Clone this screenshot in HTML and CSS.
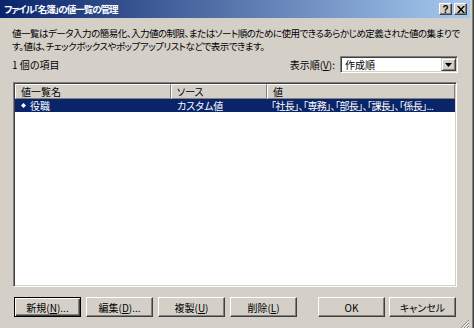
FILE: index.html
```html
<!DOCTYPE html>
<html lang="ja">
<head>
  <meta charset="UTF-8">
  <title>ファイル「名簿」の値一覧の管理</title>
  <link rel="stylesheet" href="styles.css">
</head>
<body>
  <div class="dialog">
    <div class="titlebar">
      <span class="title">ファイル「名簿」の値一覧の管理</span>
      <div class="caption-buttons">
        <span class="cap-btn help">?</span>
        <span class="cap-btn">
          <svg width="8" height="7" viewBox="0 0 8 7"><path d="M0 0h2l2 2.5L6 0h2L5 3.5 8 7H6L4 4.5 2 7H0l3-3.5z" fill="#000"/></svg>
        </span>
      </div>
    </div>

    <div class="content">
      <p class="desc">値一覧はデータ入力の簡易化、入力値の制限、またはソート順のために使用できるあらかじめ定義された値の集まりで<br>す。値は、チェックボックスやポップアップリストなどで表示できます。</p>

      <div class="toolbar">
        <span class="count">1 個の項目</span>
        <div class="sort">
          <span class="sort-label">表示順(<u>V</u>):</span>
          <div class="combo">
            <span class="combo-text">作成順</span>
            <span class="combo-btn">
              <svg width="7" height="4" viewBox="0 0 7 4"><path d="M0 0h7L3.5 4z" fill="#000"/></svg>
            </span>
          </div>
        </div>
      </div>

      <div class="listview">
        <div class="lv-header">
          <div class="col c1">値一覧名</div>
          <div class="col c2">ソース</div>
          <div class="col c3">値</div>
        </div>
        <div class="lv-row selected">
          <div class="cell c1">
            <svg class="bullet" width="5" height="5" viewBox="0 0 5 5"><path d="M2.5 0L5 2.5 2.5 5 0 2.5z" fill="#fff"/></svg>
            役職
          </div>
          <div class="cell c2">カスタム値</div>
          <div class="cell c3">「社長」、「専務」、「部長」、「課長」、「係長」...</div>
        </div>
      </div>

      <div class="buttons">
        <div class="btn-group">
          <button class="btn default">新規(<u>N</u>)...</button>
          <button class="btn">編集(<u>D</u>)...</button>
          <button class="btn">複製(<u>U</u>)</button>
          <button class="btn">削除(<u>L</u>)</button>
        </div>
        <div class="btn-group">
          <button class="btn">OK</button>
          <button class="btn">キャンセル</button>
        </div>
      </div>
    </div>

    <div class="grip">
      <svg width="10" height="10" viewBox="0 0 10 10">
        <path d="M10 1L1 10M10 4L4 10M10 7L7 10" stroke="#808080" stroke-width="1"/>
        <path d="M10 2L2 10M10 5L5 10M10 8L8 10" stroke="#fff" stroke-width="1"/>
      </svg>
    </div>
  </div>
</body>
</html>
```

FILE: styles.css
```css
/* Classic dialog look */
* {
  box-sizing: border-box;
}

body {
  margin: 0;
  background: #d4d0c8;
  font-family: "Noto Sans CJK JP", "Noto Sans", sans-serif;
  font-size: 10px;
  font-feature-settings: "palt";
  color: #000;
}

.dialog {
  position: relative;
  width: 474px;
  height: 328px;
  padding-right: 3px;
  background: #d4d0c8;
  border-right: 1px solid #404040;
  box-shadow: inset -1px 0 #808080;
  overflow: hidden;
}

/* Title bar */
.titlebar {
  height: 18px;
  display: flex;
  align-items: center;
  justify-content: space-between;
  padding: 0 3px 0 4px;
  background: linear-gradient(to right, #0a246a, #a6caf0);
}

.title {
  color: #fff;
  font-weight: bold;
  font-size: 9.5px;
  letter-spacing: -1px;
}

.caption-buttons {
  display: flex;
  gap: 2px;
}

.cap-btn {
  width: 13px;
  height: 12px;
  display: flex;
  align-items: center;
  justify-content: center;
  background: #d4d0c8;
  border: 1px solid;
  border-color: #fff #404040 #404040 #fff;
  box-shadow: inset -1px -1px #808080;
  font-family: "Liberation Sans", sans-serif;
  font-weight: bold;
  font-size: 10px;
}

/* Content */
.content {
  padding: 9px 12px 0 12px;
}

.desc {
  margin: 0;
  font-size: 9.5px;
  letter-spacing: -0.5px;
  line-height: 13px;
  white-space: nowrap;
}

.toolbar {
  display: flex;
  justify-content: space-between;
  align-items: center;
  margin-top: 3px;
  height: 17px;
}

.sort {
  display: flex;
  align-items: center;
  gap: 5px;
}

.combo {
  width: 118px;
  height: 17px;
  display: flex;
  align-items: center;
  justify-content: space-between;
  background: #fff;
  border: 1px solid;
  border-color: #808080 #fff #fff #808080;
  box-shadow: inset 1px 1px #404040, inset -1px -1px #d4d0c8;
}

.combo-text {
  padding-left: 4px;
}

.combo-btn {
  width: 15px;
  height: 13px;
  margin-right: 1px;
  display: flex;
  align-items: center;
  justify-content: center;
  background: #d4d0c8;
  border: 1px solid;
  border-color: #d4d0c8 #404040 #404040 #d4d0c8;
  box-shadow: inset 1px 1px #fff, inset -1px -1px #808080;
}

/* List view */
.listview {
  margin: 9px 1px 0 1px;
  height: 205px;
  background: #fff;
  border: 1px solid;
  border-color: #808080 #fff #fff #808080;
  box-shadow: inset 1px 1px #404040, inset -1px -1px #d4d0c8;
  padding: 1px;
}

.lv-header {
  display: flex;
  height: 15px;
}

.col {
  height: 15px;
  line-height: 13px;
  padding-left: 5px;
  background: #d4d0c8;
  border: 1px solid;
  border-color: #fff #808080 #808080 #fff;
}

.c1 {
  width: 156px;
}

.c2 {
  width: 96px;
}

.c3 {
  flex: 1;
}

.lv-row {
  display: flex;
  height: 13px;
  line-height: 13px;
}

.lv-row.selected {
  background: #0a246a;
  color: #fff;
}

.cell {
  padding-left: 6px;
  white-space: nowrap;
  overflow: hidden;
}

.cell.c3 {
  padding-left: 4px;
  letter-spacing: -0.6px;
}

.cell.c1 {
  padding-left: 6px;
  display: flex;
  align-items: center;
  gap: 4px;
}

/* Buttons */
.buttons {
  display: flex;
  justify-content: space-between;
  margin-top: 10px;
  padding: 0 2px 0 2px;
}

.btn-group {
  display: flex;
  gap: 5px;
}

.btn-group + .btn-group {
  gap: 4px;
}

.btn {
  width: 67px;
  height: 20px;
  padding: 0;
  font-family: inherit;
  font-size: 10px;
  font-feature-settings: "palt";
  color: #000;
  background: #d4d0c8;
  border: 1px solid;
  border-color: #fff #404040 #404040 #fff;
  box-shadow: inset -1px -1px #808080;
}

.btn.default {
  border-color: #000;
  box-shadow: inset 1px 1px #fff, inset -1px -1px #404040, inset -2px -2px #808080;
}

/* Size grip */
.grip {
  position: absolute;
  right: 4px;
  bottom: 1px;
  width: 10px;
  height: 10px;
}
```
